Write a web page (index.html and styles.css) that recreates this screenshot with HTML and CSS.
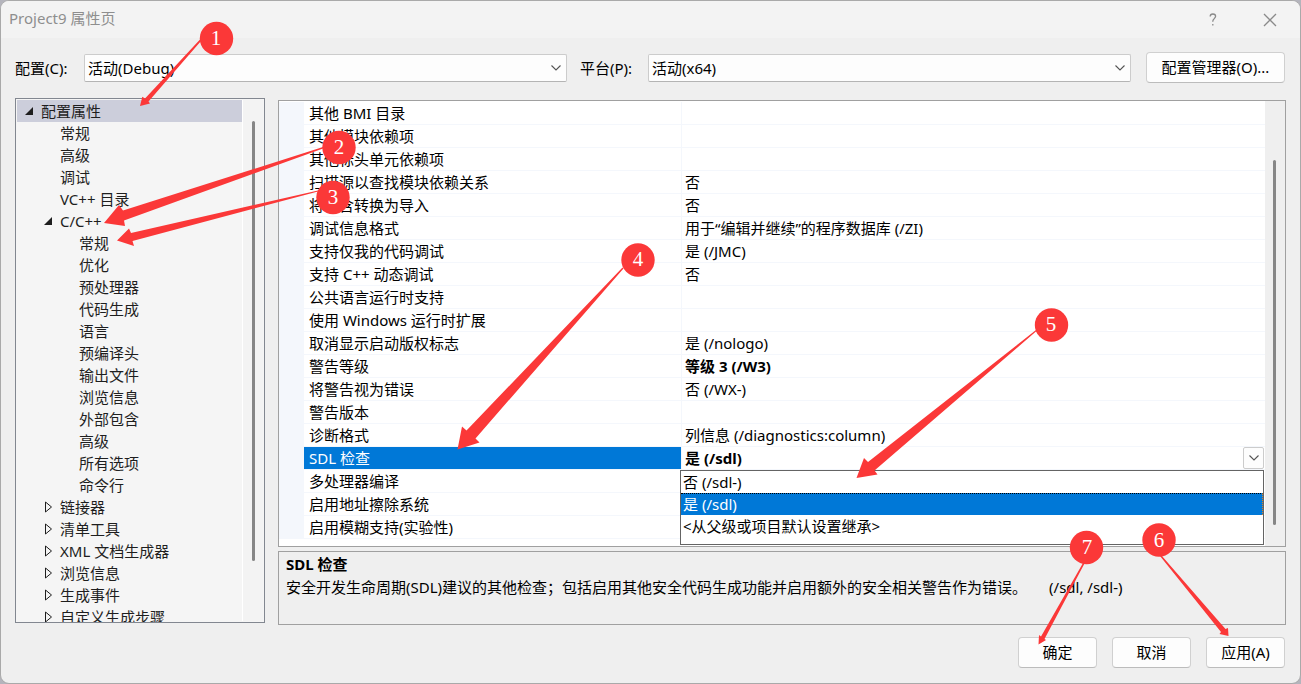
FILE: index.html
```html
<!DOCTYPE html>
<html lang="zh-CN">
<head>
<meta charset="utf-8">
<title>Project9 属性页</title>
<link rel="stylesheet" href="styles.css">
</head>
<body>
<main class="dialog">
  <header class="titlebar">
    <h1 class="title">Project9 属性页</h1>
    <button class="caption" aria-label="帮助"><svg width="16" height="16" viewBox="0 0 16 16"><path d="M5.2 4.4C5.2 2.8 6.4 2 7.9 2c1.6 0 2.7.9 2.7 2.3 0 2.200-2.800 2.500-2.800 5v.4M7.800 12v1.500"/></svg></button>
    <button class="caption" aria-label="关闭"><svg width="16" height="16" viewBox="0 0 16 16"><path d="M2 2l12 12M14 2L2 14"/></svg></button>
  </header>

  <div class="toolbar">
    <label class="toolbar-label" for="config">配置(C):</label>
    <span class="combo"><select id="config"><option>活动(Debug)</option></select><svg class="chevron" width="12" height="8" viewBox="0 0 12 8"><path d="M1.500 1.500L6 6l4.500-4.500"/></svg></span>
    <label class="toolbar-label platform" for="platform">平台(P):</label>
    <span class="combo"><select id="platform"><option>活动(x64)</option></select><svg class="chevron" width="12" height="8" viewBox="0 0 12 8"><path d="M1.500 1.500L6 6l4.500-4.500"/></svg></span>
    <button class="btn manager">配置管理器(O)...</button>
  </div>

  <div class="content">
    <nav class="tree" aria-label="配置属性">
      <ul class="nodes">
        <li class="node root selected"><svg class="glyph" width="10" height="10" viewBox="0 0 10 10"><path class="open" d="M9 1v8H1z"/></svg>配置属性</li>
        <li class="node l1">常规</li>
        <li class="node l1">高级</li>
        <li class="node l1">调试</li>
        <li class="node l1">VC++ 目录</li>
        <li class="node l1"><svg class="glyph" width="10" height="10" viewBox="0 0 10 10"><path class="open" d="M9 1v8H1z"/></svg>C/C++</li>
        <li class="node l2">常规</li>
        <li class="node l2">优化</li>
        <li class="node l2">预处理器</li>
        <li class="node l2">代码生成</li>
        <li class="node l2">语言</li>
        <li class="node l2">预编译头</li>
        <li class="node l2">输出文件</li>
        <li class="node l2">浏览信息</li>
        <li class="node l2">外部包含</li>
        <li class="node l2">高级</li>
        <li class="node l2">所有选项</li>
        <li class="node l2">命令行</li>
        <li class="node l1"><svg class="glyph" width="10" height="12" viewBox="0 0 10 12"><path class="closed" d="M2.500 1v10l6-5z"/></svg>链接器</li>
        <li class="node l1"><svg class="glyph" width="10" height="12" viewBox="0 0 10 12"><path class="closed" d="M2.500 1v10l6-5z"/></svg>清单工具</li>
        <li class="node l1"><svg class="glyph" width="10" height="12" viewBox="0 0 10 12"><path class="closed" d="M2.500 1v10l6-5z"/></svg>XML 文档生成器</li>
        <li class="node l1"><svg class="glyph" width="10" height="12" viewBox="0 0 10 12"><path class="closed" d="M2.500 1v10l6-5z"/></svg>浏览信息</li>
        <li class="node l1"><svg class="glyph" width="10" height="12" viewBox="0 0 10 12"><path class="closed" d="M2.500 1v10l6-5z"/></svg>生成事件</li>
        <li class="node l1"><svg class="glyph" width="10" height="12" viewBox="0 0 10 12"><path class="closed" d="M2.500 1v10l6-5z"/></svg>自定义生成步骤</li>
      </ul>
      <div class="track tree-track"><div class="thumb"></div></div>
    </nav>

    <div class="side">
      <section class="grid">
        <div class="rows">
          <table class="props">
            <colgroup><col class="c-gutter"><col class="c-name"><col></colgroup>
            <tbody>
            <tr><td class="gutter"></td><th scope="row">其他 BMI 目录</th><td></td></tr>
            <tr><td class="gutter"></td><th scope="row">其他模块依赖项</th><td></td></tr>
            <tr><td class="gutter"></td><th scope="row">其他标头单元依赖项</th><td></td></tr>
            <tr><td class="gutter"></td><th scope="row">扫描源以查找模块依赖关系</th><td>否</td></tr>
            <tr><td class="gutter"></td><th scope="row">将包含转换为导入</th><td>否</td></tr>
            <tr><td class="gutter"></td><th scope="row">调试信息格式</th><td>用于“编辑并继续”的程序数据库 (/ZI)</td></tr>
            <tr><td class="gutter"></td><th scope="row">支持仅我的代码调试</th><td>是 (/JMC)</td></tr>
            <tr><td class="gutter"></td><th scope="row">支持 C++ 动态调试</th><td>否</td></tr>
            <tr><td class="gutter"></td><th scope="row">公共语言运行时支持</th><td></td></tr>
            <tr><td class="gutter"></td><th scope="row">使用 Windows 运行时扩展</th><td></td></tr>
            <tr><td class="gutter"></td><th scope="row">取消显示启动版权标志</th><td>是 (/nologo)</td></tr>
            <tr><td class="gutter"></td><th scope="row">警告等级</th><td class="changed">等级 3 (/W3)</td></tr>
            <tr><td class="gutter"></td><th scope="row">将警告视为错误</th><td>否 (/WX-)</td></tr>
            <tr><td class="gutter"></td><th scope="row">警告版本</th><td></td></tr>
            <tr><td class="gutter"></td><th scope="row">诊断格式</th><td>列信息 (/diagnostics:column)</td></tr>
            <tr><td class="gutter"></td><th scope="row" class="current">SDL 检查</th><td class="changed editing">
              <div class="editor"><span>是 (/sdl)</span><button class="drop" aria-label="展开"><svg class="chev" width="12" height="8" viewBox="0 0 12 8"><path d="M1.500 1.500L6 6l4.500-4.500"/></svg></button></div>
              <ul class="menu" role="listbox" aria-label="SDL 检查">
                <li role="option">否 (/sdl-)</li>
                <li role="option" class="picked" aria-selected="true">是 (/sdl)</li>
                <li role="option">&lt;从父级或项目默认设置继承&gt;</li>
              </ul></td></tr>
            <tr><td class="gutter"></td><th scope="row">多处理器编译</th><td></td></tr>
            <tr><td class="gutter"></td><th scope="row">启用地址擦除系统</th><td></td></tr>
            <tr><td class="gutter"></td><th scope="row">启用模糊支持(实验性)</th><td></td></tr>
            </tbody>
          </table>
        </div>
        <div class="track grid-track"><div class="thumb"></div></div>
      </section>
      <section class="help">
        <h2 class="help-title">SDL 检查</h2>
        <p class="help-text">安全开发生命周期(SDL)建议的其他检查；包括启用其他安全代码生成功能并启用额外的安全相关警告作为错误。<span class="switches">(/sdl, /sdl-)</span></p>
      </section>
    </div>
  </div>

  <footer class="footer">
    <button class="btn">确定</button>
    <button class="btn">取消</button>
    <button class="btn">应用(A)</button>
  </footer>
</main>

<svg class="notes" width="1301" height="684" viewBox="0 0 1301 684">
  <g class="arrows">
    <path d="M200 39.500L145 98.500 142.300 96.700 140 106 150 103.500 148.500 101.500 201 41z"/>
    <path d="M323 147L123 210.500 119 205 104 223 125 226 124 220.500 323 148.500z"/>
    <path d="M318 190.500L131 233 129 228.500 117 240.500 134 246 132.500 241 318 191.500z"/>
    <path d="M622.500 267.500L466.500 430.500 462 426.500 457.500 449.500 479.500 442.500 475.500 438.500 623.500 268.500z"/>
    <path d="M1036 330L868 462 864 458 856.500 478 877.500 474.500 874.500 470.500 1036.500 331z"/>
    <path d="M1161.500 555.500L1225.500 629 1228 628 1228.500 636 1219.500 634 1221 632 1160 556z"/>
    <path d="M1083 563L1041 636.500 1039 635 1038.500 644.500 1046 640 1044.500 639 1084.500 563.500z"/>
  </g>
  <g class="badges">
    <circle cx="216.500" cy="38.500" r="16.700"/><circle cx="339" cy="147.500" r="16.700"/><circle cx="333" cy="197.500" r="16.700"/><circle cx="638" cy="260" r="16.700"/><circle cx="1051.500" cy="325" r="16.700"/><circle cx="1159" cy="540" r="16.700"/><circle cx="1086.500" cy="547.500" r="16.700"/>
  </g>
  <g class="numbers">
    <text x="216" y="45">1</text><text x="339" y="154">2</text><text x="333" y="204">3</text><text x="638" y="266">4</text><text x="1051" y="331">5</text><text x="1159" y="547">6</text><text x="1087" y="554">7</text>
  </g>
</svg>
</body>
</html>
```
FILE: styles.css
```css
* { box-sizing: border-box; }
body {
  margin: 0;
  background: #b4b4bc;
  color: #000;
  font: 15px/22px "Noto Sans", "Noto Sans CJK SC", sans-serif;
}
button, select { font: inherit; color: inherit; }
ul { list-style: none; margin: 0; padding: 0; }

.dialog {
  display: flex;
  flex-direction: column;
  height: 100vh;
  background: #efefef;
  border: 1px solid #a9a9a9;
  border-radius: 9px;
  overflow: hidden;
}
.titlebar {
  display: flex;
  align-items: center;
  flex: none;
  height: 37px;
  padding: 0 13px 0 8px;
  background: #f3f3f3;
  color: #8e8e8e;
}
.title { flex: 1; margin: 0; padding-bottom: 4px; font-size: 15px; font-weight: 400; }
.caption {
  display: flex;
  align-items: center;
  justify-content: center;
  width: 34px;
  height: 32px;
  margin-left: 23px;
  padding: 0;
  border: 0;
  background: none;
}
.caption path { fill: none; stroke: #8a8a8a; stroke-width: 1.300; }

.toolbar {
  display: flex;
  align-items: center;
  flex: none;
  padding: 14px 15px 15px 14px;
}
.toolbar-label { flex: none; width: 69px; }
.platform { width: 68px; margin-left: 13px; }
.combo { position: relative; flex: 1; height: 28px; }
.combo select {
  appearance: none;
  width: 100%;
  height: 28px;
  padding: 0 24px 0 3px;
  border: 1px solid #ccc;
  border-bottom-color: #b4b4b4;
  border-radius: 2px;
  background: #fdfdfd;
}
.chevron { position: absolute; right: 5px; top: 10px; }
.chevron path, .chev path { fill: none; stroke: #555; stroke-width: 1.100; }
.btn {
  height: 31px;
  min-width: 79px;
  padding: 0 0 2px;
  border: 1px solid #d0d0d0;
  border-bottom-color: #bcbcbc;
  border-radius: 4px;
  background: #fdfdfd;
}
.manager { width: 139px; margin-left: 15px; }

.content { display: flex; flex: 1; gap: 13px; min-height: 0; padding: 0 14px; }
.tree {
  display: flex;
  flex: none;
  width: 250px;
  margin-bottom: 2px;
  padding: 1px;
  border: 1px solid #828790;
  background: #f5f5f5;
  color: #1e1e1e;
  overflow: hidden;
}
.nodes { flex: 1; }
.node { display: flex; align-items: center; height: 22px; white-space: nowrap; }
.node .glyph { flex: none; width: 10px; margin-right: 7px; }
.root { padding-left: 7px; }
.l1 { padding-left: 43px; }
.l1:has(.glyph) { padding-left: 26px; }
.l2 { padding-left: 62px; }
.selected { background: #cccedb; }
.open { fill: #1e1e1e; }
.closed { fill: none; stroke: #1e1e1e; }
.track { display: flex; justify-content: center; flex: none; }
.tree-track { width: 21px; padding: 21px 0 60px; border-left: 1px solid #fff; background: #f3f3f3; }
.thumb { width: 3px; border-radius: 2px; background: #868686; }

.side { display: flex; flex: 1; flex-direction: column; gap: 4px; min-width: 0; padding-top: 2px; }
.grid { display: flex; flex: 1; min-height: 0; border: 1px solid #a0a0a0; background: #fff; }
.rows { flex: 1; padding-top: 1px; }
.props { width: 100%; table-layout: fixed; border-collapse: separate; border-spacing: 0; }
.c-gutter { width: 25px; }
.c-name { width: 378px; }
.props th, .props td {
  height: 23px;
  padding: 0 3px;
  border-bottom: 1px solid #f4f7fc;
  line-height: 22px;
  font-weight: 400;
  text-align: left;
  white-space: nowrap;
}
.props th { padding-left: 5px; border-right: 1px solid #f4f7fc; }
.props .gutter { background: #f4f7fc; }
.props .current { background: #0078d7; background-clip: padding-box; color: #fff; }
.props .changed { font-weight: 700; }
.props .editing { position: relative; padding-right: 1px; }
.editor { display: flex; align-items: center; justify-content: space-between; height: 22px; }
.drop {
  display: flex;
  align-items: center;
  justify-content: center;
  width: 21px;
  height: 22px;
  padding: 0;
  border: 1px solid #ccc;
  border-radius: 2px;
  background: #fdfdfd;
}
.menu {
  position: absolute;
  z-index: 1;
  top: 23px;
  left: -2px;
  right: 1px;
  padding-bottom: 7px;
  border: 1px solid #646464;
  background: #fff;
  font-weight: 400;
}
.menu li { height: 22px; padding-left: 2px; }
.menu .picked {
  border-top: 1px dotted #000;
  border-right: 1px dotted #e08020;
  background: #0078d7;
  color: #fff;
  line-height: 20px;
}
.grid-track { width: 20px; padding: 59px 1px 21px 0; background: #efefef; }

.help { flex: none; height: 74px; padding: 1px 7px; border: 1px solid #a0a0a0; }
.help-title, .help-text { margin: 0; font-size: 15px; line-height: 23px; }
.switches { margin-left: 22px; }

.footer { display: flex; flex: none; justify-content: flex-end; gap: 15px; padding: 12px 15px 15px; }

.notes { position: absolute; z-index: 2; left: 0; top: 0; pointer-events: none; }
.arrows, .badges { fill: #fb3838; }
.numbers { fill: #fff; font: 21px "Liberation Serif", serif; text-anchor: middle; }
```
